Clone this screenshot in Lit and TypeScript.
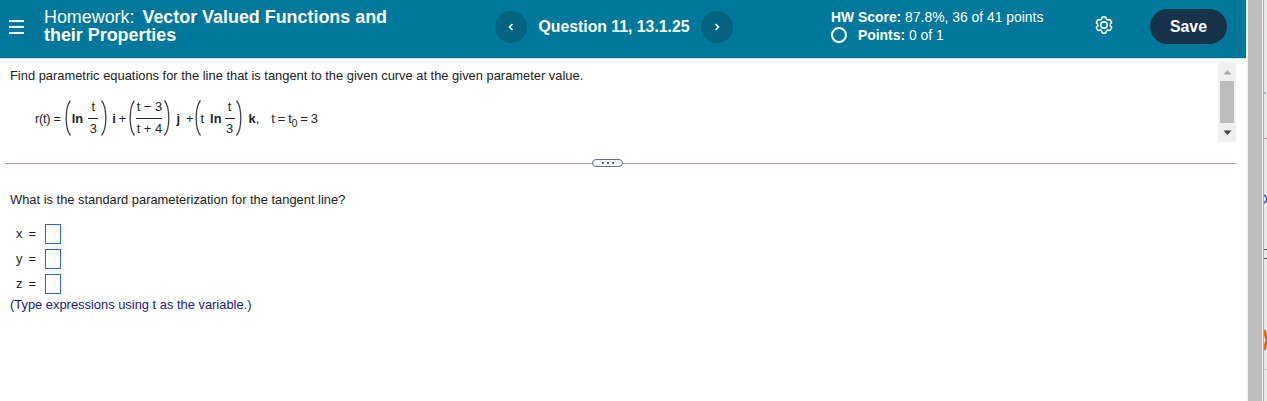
import { LitElement, html, css, svg } from 'lit';
import { customElement } from 'lit/decorators.js';

// tall bracket used around the math fractions
const paren = (flip: boolean, gap: number) => html`
  <svg class="paren ${flip ? 'flip' : ''}" style="margin-left:${gap}px" viewBox="0 0 6 36" width="6" height="36">
    <path d="M5.5 .5 C2.6 4 1.2 9 1.2 18 C1.2 27 2.6 32 5.5 35.5" fill="none" stroke="#444" stroke-width="1.3" />
  </svg>
`;

const frac = (top: string, bottom: string, gap: number, width: number) => html`
  <span class="frac" style="margin-left:${gap}px;width:${width}px"><span class="num">${top}</span><span class="den">${bottom}</span></span>
`;

// six lobed outline, the lobes are computed around the centre of the icon
const gearPath = () => {
  const pt = (deg: number, r: number) => {
    const a = (deg * Math.PI) / 180;
    return `${(9 + r * Math.cos(a)).toFixed(2)} ${(9 + r * Math.sin(a)).toFixed(2)}`;
  };
  let d = '';
  for (let k = 0; k < 6; k++) {
    const c = -90 + k * 60;
    d += `${k === 0 ? 'M' : 'L'}${pt(c - 13, 8)} Q${pt(c, 8.5)} ${pt(c + 13, 8)} L${pt(c + 22, 6.4)} Q${pt(c + 30, 6.2)} ${pt(c + 38, 6.4)} `;
  }
  return d + 'Z';
};

const gear = svg`
  <path d=${gearPath()} fill="none" stroke="#fff" stroke-width="1.5" stroke-linejoin="round" />
  <circle cx="9" cy="9" r="3.2" fill="none" stroke="#fff" stroke-width="1.7" />
`;

@customElement('app-root')
export class AppRoot extends LitElement {
  static styles = css`
    :host {
      display: flex;
      width: 1267px;
      height: 401px;
      overflow: hidden;
      background: #fff;
      font-family: 'Liberation Sans', Arial, sans-serif;
      color: #222;
    }
    .main {
      width: 1246px;
      flex: none;
      display: flex;
      flex-direction: column;
    }
    header {
      height: 59px;
      flex: none;
      box-sizing: border-box;
      background: #00789c;
      border-bottom: 1px solid #d5dfe3;
      padding-bottom: 5px;
      color: #fff;
      display: flex;
      align-items: center;
    }
    .menu {
      width: 44px;
      flex: none;
      display: flex;
      flex-direction: column;
      gap: 4px;
      padding-left: 9px;
      box-sizing: border-box;
    }
    .menu i {
      display: block;
      width: 15px;
      height: 2px;
      background: #fff;
    }
    .title {
      width: 451px;
      flex: none;
      font-size: 17.9px;
      line-height: 18px;
      margin-top: -2px;
    }
    .title b {
      margin-left: 3px;
    }
    .title b.wrap {
      margin-left: 0;
    }
    .nav {
      display: flex;
      align-items: center;
      width: 336px;
      flex: none;
    }
    .round {
      width: 32px;
      height: 32px;
      border-radius: 50%;
      background: #056382;
      display: flex;
      align-items: center;
      justify-content: center;
      flex: none;
    }
    .q {
      font-weight: bold;
      font-size: 15.8px;
      width: 174px;
      text-align: center;
      flex: none;
    }
    .score {
      width: 262px;
      flex: none;
      font-size: 13.9px;
      line-height: 18px;
      margin-top: -2px;
    }
    .points {
      display: flex;
      align-items: center;
      gap: 11px;
    }
    .ring {
      width: 12px;
      height: 12px;
      border: 2px solid #fff;
      border-radius: 50%;
    }
    .gear {
      width: 57px;
      box-sizing: border-box;
      padding-left: 2px;
      margin-top: -3px;
      flex: none;
      display: flex;
    }
    .save {
      width: 77px;
      height: 35px;
      border-radius: 18px;
      background: #16334a;
      font-weight: bold;
      font-size: 15.8px;
      display: flex;
      align-items: center;
      justify-content: center;
      flex: none;
    }
    .top {
      display: flex;
      height: 84px;
      box-sizing: border-box;
      flex: none;
      padding-top: 4px;
    }
    .problem {
      width: 1218px;
      flex: none;
      padding-left: 10px;
      box-sizing: border-box;
    }
    .text {
      font-size: 12.9px;
      line-height: 14px;
    }
    .problem .text {
      margin-top: 6px;
    }
    .math {
      display: flex;
      align-items: center;
      height: 36px;
      margin-top: 17px;
      padding-left: 25px;
      font-size: 12.9px;
      white-space: pre;
    }
    .rt {
      letter-spacing: -0.3px;
    }
    .paren {
      flex: none;
    }
    .paren.flip {
      transform: scaleX(-1);
    }
    .frac {
      display: inline-flex;
      flex-direction: column;
      align-items: stretch;
      text-align: center;
      flex: none;
    }
    .num {
      padding-bottom: 6px;
      border-bottom: 1px solid #222;
      line-height: 10px;
    }
    .den {
      padding-top: 4px;
      line-height: 12px;
    }
    .ln {
      margin-left: 1px;
    }
    .param {
      margin-left: 12px;
      word-spacing: -0.7px;
    }
    sub {
      font-size: 10px;
      line-height: 0;
    }
    .scroll {
      width: 18px;
      height: 79px;
      background: #f0f0f0;
      display: flex;
      flex-direction: column;
      align-items: center;
      flex: none;
    }
    .up, .down {
      height: 18px;
      flex: none;
      display: flex;
      align-items: center;
      justify-content: center;
    }
    .down {
      height: 19px;
    }
    .thumb {
      width: 14px;
      flex: 1;
      background: #bdbdbd;
    }
    .rule {
      margin: 20px 10px 0 5px;
      height: 1px;
      flex: none;
      background: #b391a0;
      display: flex;
      justify-content: center;
    }
    .pill {
      width: 29px;
      height: 6px;
      margin: -4px 0 0 -26px;
      border: 1.5px solid #66757f;
      border-radius: 5px;
      background: #f3f5f6;
      display: flex;
      align-items: center;
      justify-content: center;
      gap: 3px;
      flex: none;
    }
    .pill i {
      width: 2px;
      height: 2px;
      background: #5b6873;
    }
    .answer {
      padding: 29px 0 0 10px;
    }
    .rows {
      margin-top: 17px;
      display: flex;
      flex-direction: column;
      gap: 5px;
    }
    .row {
      display: flex;
      align-items: center;
      height: 20px;
      font-size: 12.9px;
    }
    .var {
      width: 35px;
      box-sizing: border-box;
      padding-left: 6px;
      padding-bottom: 1px;
      word-spacing: 2.5px;
      flex: none;
    }
    .box {
      width: 16px;
      height: 20px;
      border: 1px solid #2f66cc;
      box-sizing: border-box;
      flex: none;
    }
    .hint {
      color: #1a1a80;
      margin-top: 4px;
    }
    .strip {
      flex: 1;
      display: flex;
      background: #f7f7f7;
    }
    .strip .bar {
      width: 14px;
      margin-left: 2px;
      background: #bdbdbd;
      flex: none;
    }
    .strip .edge {
      width: 3px;
      flex: none;
      background: #e8e8e8;
      border-left: 1px solid #a8a8a8;
      margin-left: 1px;
    }
    .edge svg {
      display: block;
    }
  `;

  render() {
    return html`
      <div class="main">
        <header>
          <div class="menu"><i></i><i></i><i></i></div>
          <div class="title">Homework: <b>Vector Valued Functions and</b><br /><b class="wrap">their Properties</b></div>
          <div class="nav">
            <span class="round">
              <svg width="8" height="10" viewBox="0 0 8 10"><path d="M5.5 2 L2.5 5 L5.5 8" fill="none" stroke="#fff" stroke-width="1.5" /></svg>
            </span>
            <span class="q">Question 11, 13.1.25</span>
            <span class="round">
              <svg width="8" height="10" viewBox="0 0 8 10"><path d="M2.5 2 L5.5 5 L2.5 8" fill="none" stroke="#fff" stroke-width="1.5" /></svg>
            </span>
          </div>
          <div class="score">
            <div><b>HW Score:</b> 87.8%, 36 of 41 points</div>
            <div class="points"><span class="ring"></span><span><b>Points:</b> 0 of 1</span></div>
          </div>
          <div class="gear"><svg width="18" height="18" viewBox="0 0 18 18">${gear}</svg></div>
          <div class="save">Save</div>
        </header>
        <div class="top">
          <div class="problem">
            <div class="text">Find parametric equations for the line that is tangent to the given curve at the given parameter value.</div>
            <div class="math">
              <span class="rt">r(t) =</span>${paren(false, 4)}<b class="ln">ln</b>${frac('t', '3', 5, 10)}${paren(true, 3)}<b style="margin-left:5px">i</b><span style="margin-left:3px">+</span>${paren(false, 3)}${frac('t − 3', 't + 4', 1, 26)}${paren(true, 2)}<b style="margin-left:6px">j</b><span style="margin-left:6px">+</span>${paren(false, 1)}<span>t</span><b style="margin-left:6px">ln</b>${frac('t', '3', 3, 10)}${paren(true, 1)}<b style="margin-left:7px">k</b><span>,</span><span class="param">t = t<sub>0</sub> = 3</span>
            </div>
          </div>
          <div class="scroll">
            <div class="up"><svg width="9" height="6" viewBox="0 0 9 6"><path d="M4.5 1 L8.5 5.5 H.5z" fill="#a8a8a8" /></svg></div>
            <div class="thumb"></div>
            <div class="down"><svg width="9" height="6" viewBox="0 0 9 6"><path d="M.5 .5 H8.5 L4.5 5z" fill="#444" /></svg></div>
          </div>
        </div>
        <div class="rule"><span class="pill"><i></i><i></i><i></i></span></div>
        <div class="answer">
          <div class="text">What is the standard parameterization for the tangent line?</div>
          <div class="rows">
            <div class="row"><span class="var">x =</span><span class="box"></span></div>
            <div class="row"><span class="var">y =</span><span class="box"></span></div>
            <div class="row"><span class="var">z =</span><span class="box"></span></div>
          </div>
          <div class="text hint">(Type expressions using t as the variable.)</div>
        </div>
      </div>
      <div class="strip">
        <div class="bar"></div>
        <div class="edge">
          <svg width="3" height="401" viewBox="0 0 3 401">
            <rect x="0" y="92" width="2" height="2" fill="#8fb4d8" />
            <rect x="0" y="138" width="3" height="1" fill="#b391a0" />
            <path d="M0 195 Q3 197 3 199 Q3 201 0 203" fill="none" stroke="#3a55b0" stroke-width="1.6" />
            <rect x="0" y="249" width="3" height="1" fill="#555" />
            <rect x="0" y="258" width="3" height="1" fill="#555" />
            <path d="M0 330 L3 340 L0 350" fill="none" stroke="#e06c00" stroke-width="3" />
            <rect x="0" y="369" width="3" height="1" fill="#c8c8c8" />
          </svg>
        </div>
      </div>
    `;
  }
}
